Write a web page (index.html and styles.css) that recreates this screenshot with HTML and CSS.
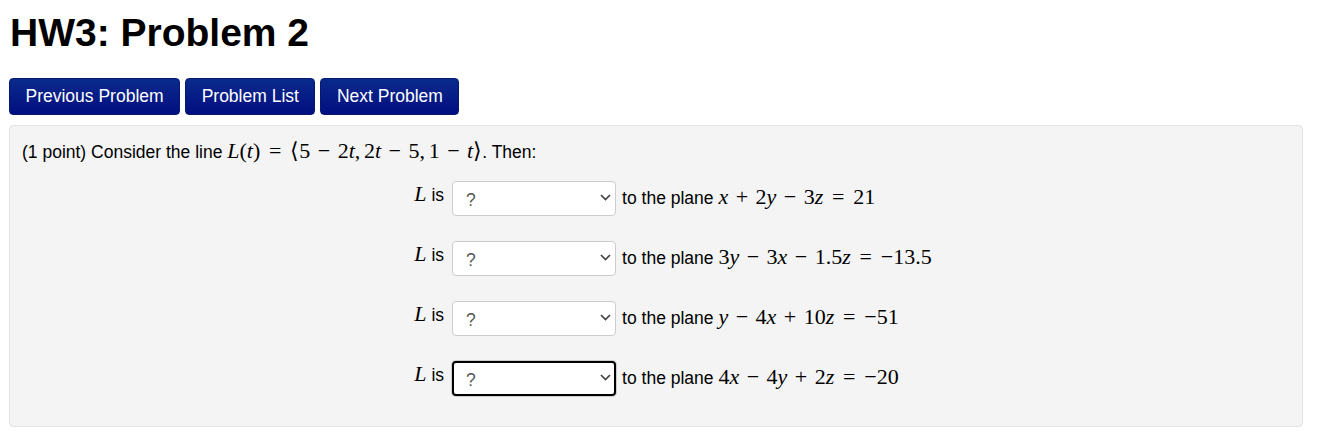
FILE: index.html
```html
<!DOCTYPE html>
<html lang="en">
<head>
    <meta charset="UTF-8">
    <title>HW3: Problem 2</title>
    <link rel="stylesheet" href="styles.css">
</head>
<body>
    <h1 class="title">HW3: Problem 2</h1>

    <div class="nav">
        <button class="nav-button">Previous Problem</button>
        <button class="nav-button">Problem List</button>
        <button class="nav-button">Next Problem</button>
    </div>

    <div class="problem">
        <p class="intro">(1 point) Consider the line <span class="math"><i>L</i>(<i>t</i>)<span class="rel">=</span>⟨5<span class="op">−</span>2<i>t</i>,<span class="thin"></span>2<i>t</i><span class="op">−</span>5,<span class="thin"></span>1<span class="op">−</span><i>t</i>⟩</span>. Then:</p>

        <table class="answers">
            <tr>
                <td class="label"><span class="math"><i>L</i></span> is</td>
                <td>
                    <span class="select-wrap">
                        <select class="answer"><option>?</option><option>parallel</option><option>perpendicular</option><option>neither</option></select>
                        <svg class="chevron" width="11" height="7" viewBox="0 0 11 7"><path d="M1 1 L5.5 5.5 L10 1" fill="none" stroke="#444" stroke-width="1.7"/></svg>
                    </span>
                </td>
                <td class="plane">to the plane <span class="math"><i>x</i><span class="op">+</span>2<i>y</i><span class="op">−</span>3<i>z</i><span class="rel">=</span>21</span></td>
            </tr>
            <tr>
                <td class="label"><span class="math"><i>L</i></span> is</td>
                <td>
                    <span class="select-wrap">
                        <select class="answer"><option>?</option><option>parallel</option><option>perpendicular</option><option>neither</option></select>
                        <svg class="chevron" width="11" height="7" viewBox="0 0 11 7"><path d="M1 1 L5.5 5.5 L10 1" fill="none" stroke="#444" stroke-width="1.7"/></svg>
                    </span>
                </td>
                <td class="plane">to the plane <span class="math">3<i>y</i><span class="op">−</span>3<i>x</i><span class="op">−</span>1.5<i>z</i><span class="rel">=</span>−13.5</span></td>
            </tr>
            <tr>
                <td class="label"><span class="math"><i>L</i></span> is</td>
                <td>
                    <span class="select-wrap">
                        <select class="answer"><option>?</option><option>parallel</option><option>perpendicular</option><option>neither</option></select>
                        <svg class="chevron" width="11" height="7" viewBox="0 0 11 7"><path d="M1 1 L5.5 5.5 L10 1" fill="none" stroke="#444" stroke-width="1.7"/></svg>
                    </span>
                </td>
                <td class="plane">to the plane <span class="math"><i>y</i><span class="op">−</span>4<i>x</i><span class="op">+</span>10<i>z</i><span class="rel">=</span>−51</span></td>
            </tr>
            <tr>
                <td class="label"><span class="math"><i>L</i></span> is</td>
                <td>
                    <span class="select-wrap">
                        <select class="answer active"><option>?</option><option>parallel</option><option>perpendicular</option><option>neither</option></select>
                        <svg class="chevron" width="11" height="7" viewBox="0 0 11 7"><path d="M1 1 L5.5 5.5 L10 1" fill="none" stroke="#444" stroke-width="1.7"/></svg>
                    </span>
                </td>
                <td class="plane">to the plane <span class="math">4<i>x</i><span class="op">−</span>4<i>y</i><span class="op">+</span>2<i>z</i><span class="rel">=</span>−20</span></td>
            </tr>
        </table>
    </div>
</body>
</html>
```

FILE: styles.css
```css
body { font-family: "Liberation Sans", Arial, sans-serif; margin: 0; padding: 0 9px; color: #000; background: #fff; }
.title { font-size: 39px; font-weight: bold; margin: 0; padding: 10px 0 0 1px; line-height: 46px; }
.nav { display: flex; gap: 5px; margin-top: 22px; }
.nav-button { height: 37px; padding: 0 15.5px; font-family: "Liberation Sans", Arial, sans-serif; font-size: 17.5px; color: #fff; background: linear-gradient(#0a2a8c, #020e80); border: 1px solid #041a6e; border-radius: 4px; cursor: pointer; }
.problem { margin-top: 10px; width: 1268px; padding: 10px 12px 17px; background: #f4f4f4; border: 1px solid #e3e3e3; border-radius: 4px; }
.intro { font-size: 17.5px; margin: 2px 0 17px; }
.math { font-family: "Liberation Serif", "Times New Roman", serif; font-size: 22px; }
.math i { font-style: italic; }
.op { margin: 0 0.34em; }
.rel { margin: 0 0.4em; }
.thin { margin-left: 0.17em; }
.answers { margin: 0 auto; border-collapse: collapse; position: relative; left: 17px; }
.answers td { padding: 0 0 25px; }
.answers tr:last-child td { padding-bottom: 13px; }
.label { vertical-align: top; font-size: 17.5px; padding-right: 8px !important; white-space: nowrap; }
.plane { font-size: 17.5px; white-space: nowrap; vertical-align: top; padding-left: 6px !important; line-height: 32px; }
.select-wrap { position: relative; display: inline-block; }
.answer { width: 164px; height: 35px; font-family: "Liberation Sans", Arial, sans-serif; font-size: 17.5px; color: #555; background: #fff; border: 1px solid #ccc; border-radius: 4px; padding: 2px 13px 0; appearance: none; -webkit-appearance: none; }
.answer.active { border: 2px solid #000; padding-left: 12px; box-shadow: 0 0 0 1px #ccc; }
.chevron { position: absolute; right: 5px; top: 13px; pointer-events: none; }
```
